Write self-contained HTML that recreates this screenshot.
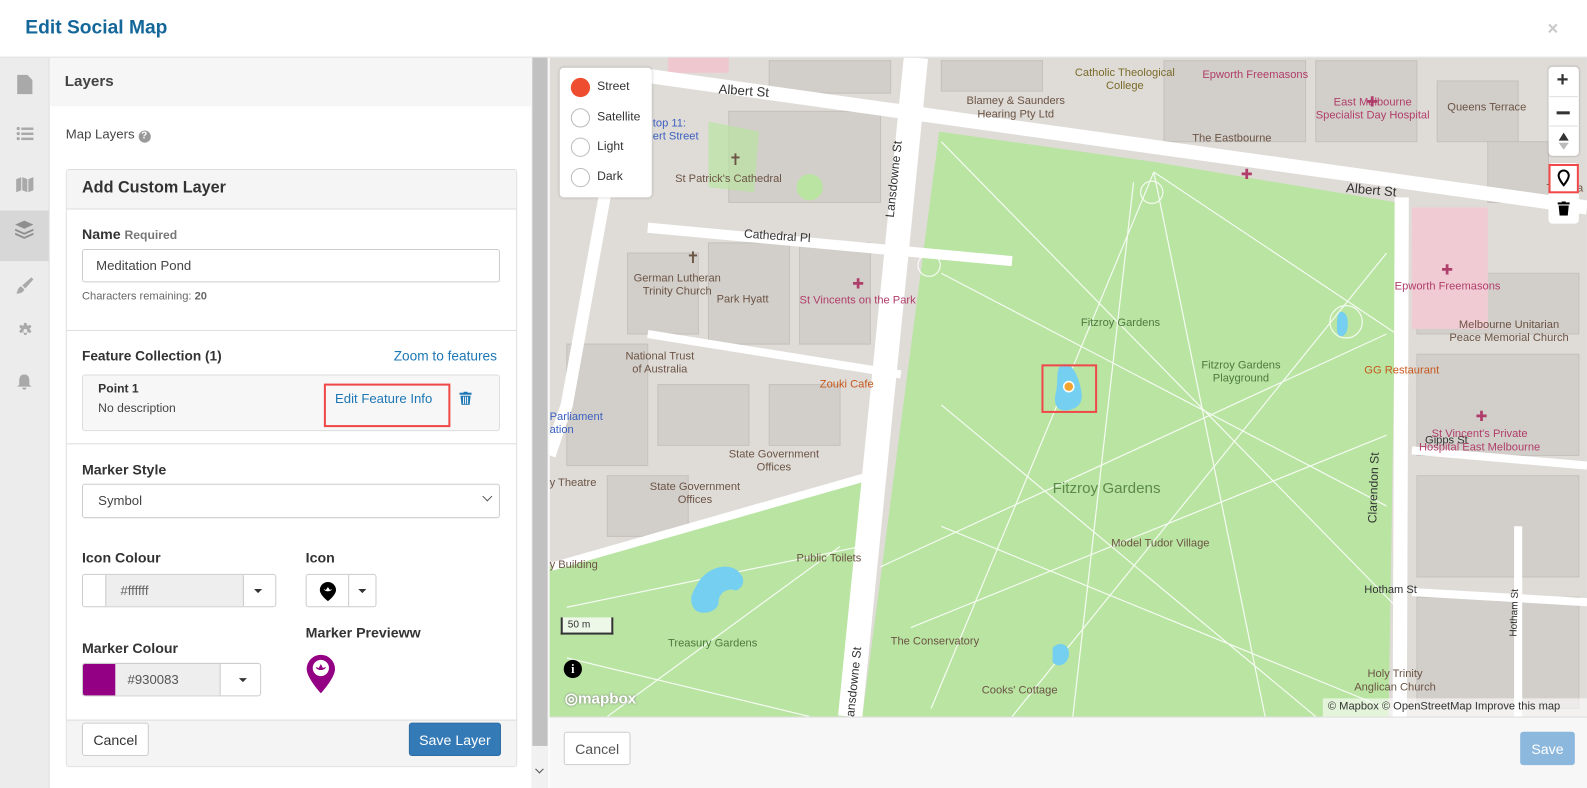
<!DOCTYPE html>
<html><head><meta charset="utf-8"><style>
*{box-sizing:border-box;margin:0;padding:0}
body{width:1587px;height:779px;overflow:hidden;background:#fff;font-family:"Liberation Sans",sans-serif;color:#333;position:relative;font-size:13px}
#w{position:absolute;left:0;top:0;width:1568px;height:770px;transform:scale(1.0121);transform-origin:0 0}
.a{position:absolute}
.lbl{font-weight:bold;font-size:14px;color:#333}
.inp{border:1px solid #ccc;border-radius:3px;background:#fff}
.btn{border:1px solid #ccc;border-radius:3px;background:#fff;font-size:14px;display:flex;align-items:center;justify-content:center}
.ml{font-size:11px;color:#6b5444;text-align:center;line-height:13px;position:absolute;white-space:nowrap}
</style></head><body><div id="w">
<div class="a" style="left:25px;top:17px;font-size:19px;font-weight:bold;color:#15679a">Edit Social Map</div>
<div class="a" style="left:1529px;top:18px;font-size:18px;color:#c8c8c8;font-weight:bold">×</div>
<div class="a" style="left:0;top:56px;width:1568px;height:1px;background:#ddd"></div>

<div class="a" style="left:0;top:57px;width:49px;height:722px;background:#ececec;border-right:1px solid #ddd"></div>
<div class="a" style="left:0;top:208px;width:48px;height:50px;background:#d7d7d7"></div>
<svg class="a" style="left:0;top:57px" width="48" height="340" fill="#a9a9a9">
<path d="M17 17h10l5 5v14h-15z"/>
<g><circle cx="18" cy="70" r="1.6"/><circle cx="18" cy="75" r="1.6"/><circle cx="18" cy="80" r="1.6"/><rect x="21" y="69" width="12" height="2.4"/><rect x="21" y="74" width="12" height="2.4"/><rect x="21" y="79" width="12" height="2.4"/></g>
<path d="M16 120l5-2v13l-5 2zM22 118l5 2v13l-5-2zM28 120l5-2v13l-5 2z"/>
<path d="M24 161l9 4-9 4-9-4zM15 169l9 4 9-4v2l-9 4-9-4zM15 173l9 4 9-4v2l-9 4-9-4z" fill="#8e8e8e"/>
<path d="M31 217l2 2-8 9-3-3zM21 226l3 3c-1 3-4 4-8 4 2-2 1-6 5-7z"/>
<path d="M24 262l2 0 1 3 3-1 1 2-2 2 2 2-1 2-3-1-1 3h-2l-1-3-3 1-1-2 2-2-2-2 1-2 3 1zM25 268a2 2 0 1 0 .1 0z"/>
<path d="M24 313c4 0 5 3 5 6v4l2 2h-14l2-2v-4c0-3 1-6 5-6zM22 326h4a2 2 0 0 1-4 0z"/>
</svg>

<div class="a" style="left:49px;top:57px;width:476px;height:48px;background:#f6f6f6"></div>
<div class="a" style="left:64px;top:72px;font-size:15px;font-weight:bold;color:#444">Layers</div>
<div class="a" style="left:65px;top:125px;font-size:13px;color:#444">Map Layers <span style="display:inline-block;width:12px;height:12px;border-radius:50%;background:#999;color:#fff;font-size:10px;text-align:center;line-height:12px;font-weight:bold">?</span></div>
<div class="a" style="left:65px;top:167px;width:446px;height:591px;border:1px solid #ddd;border-radius:3px;background:#fff"></div>
<div class="a" style="left:66px;top:168px;width:444px;height:39px;background:#f5f5f5;border-bottom:1px solid #ddd"></div>
<div class="a" style="left:81px;top:177px;font-size:16px;font-weight:bold;color:#333">Add Custom Layer</div>
<div class="a lbl" style="left:81px;top:223px">Name <span style="font-size:12px;color:#777">Required</span></div>
<div class="a inp" style="left:81px;top:246px;width:413px;height:33px;padding:8px 13px;font-size:13px;color:#444">Meditation Pond</div>
<div class="a" style="left:81px;top:287px;font-size:11px;color:#666">Characters remaining: <b>20</b></div>
<div class="a" style="left:66px;top:326px;width:444px;height:1px;background:#ddd"></div>
<div class="a lbl" style="left:81px;top:344px;font-size:13.5px">Feature Collection (1)</div>
<div class="a" style="left:389px;top:344px;font-size:13.5px;color:#1d77b5">Zoom to features</div>
<div class="a" style="left:81px;top:370px;width:413px;height:56px;background:#f7f7f7;border:1px solid #ddd;border-radius:3px"></div>
<div class="a" style="left:97px;top:377px;font-size:12px;font-weight:bold;color:#333">Point 1</div>
<div class="a" style="left:97px;top:396px;font-size:12px;color:#444">No description</div>
<div class="a" style="left:320px;top:379px;width:125px;height:43px;border:2px solid #f04848"></div>
<div class="a" style="left:331px;top:386px;font-size:13px;color:#1d77b5">Edit Feature Info</div>
<svg class="a" style="left:454px;top:387px" width="12" height="13" fill="#1d77b5"><rect x="0" y="1" width="12" height="2"/><rect x="4" y="0" width="4" height="2"/><path d="M1 4h10l-1 9H2zM3.5 5v7h1V5zM5.5 5v7h1V5zM7.5 5v7h1V5z" fill-rule="evenodd"/></svg>
<div class="a" style="left:66px;top:438px;width:444px;height:1px;background:#ddd"></div>
<div class="a lbl" style="left:81px;top:456px">Marker Style</div>
<div class="a inp" style="left:81px;top:478px;width:413px;height:34px;padding:8px 15px;font-size:13px;color:#444">Symbol</div>
<div class="a" style="left:478px;top:487px;width:7px;height:7px;border-right:1.5px solid #555;border-bottom:1.5px solid #555;transform:rotate(45deg)"></div>
<div class="a lbl" style="left:81px;top:543px">Icon Colour</div>
<div class="a inp" style="left:81px;top:567px;width:192px;height:33px;overflow:hidden"><div class="a" style="left:22px;top:0;width:137px;height:33px;background:#eee;border-left:1px solid #ccc;border-right:1px solid #ccc;padding:8px 14px;font-size:13px;color:#666">#ffffff</div><div class="a" style="left:169px;top:14px;border:4px solid transparent;border-top:4px solid #333"></div></div>
<div class="a lbl" style="left:302px;top:543px">Icon</div>
<div class="a inp" style="left:302px;top:567px;width:70px;height:33px"><div class="a" style="left:41px;top:0;width:1px;height:31px;background:#ccc"></div><div class="a" style="left:51px;top:14px;border:4px solid transparent;border-top:4px solid #333"></div>
<svg class="a" style="left:12px;top:6px" width="18" height="20"><path d="M9 1a8 8 0 0 1 8 8c0 5-8 11-8 11S1 14 1 9a8 8 0 0 1 8-8z" fill="#000"/><path d="M5 8c1 3 7 3 8 0l-2 1-2-3-2 3z" fill="#fff"/></svg></div>
<div class="a lbl" style="left:81px;top:632px">Marker Colour</div>
<div class="a inp" style="left:81px;top:655px;width:177px;height:33px;overflow:hidden"><div class="a" style="left:0;top:0;width:32px;height:33px;background:#930083"></div><div class="a" style="left:32px;top:0;width:104px;height:33px;background:#eee;border-right:1px solid #ccc;padding:8px 12px;font-size:13px;color:#555">#930083</div><div class="a" style="left:154px;top:14px;border:4px solid transparent;border-top:4px solid #333"></div></div>
<div class="a lbl" style="left:302px;top:617px">Marker Previeww</div>
<svg class="a" style="left:302px;top:646px" width="30" height="40"><path d="M15 1a14 14 0 0 1 14 14c0 9-14 24-14 24S1 24 1 15A14 14 0 0 1 15 1z" fill="#930083"/><circle cx="15" cy="14" r="8" fill="#fff"/><path d="M10 13c1 4 9 4 10 0l-3 1-2-4-2 4z" fill="#930083"/></svg>
<div class="a" style="left:66px;top:711px;width:444px;height:46px;background:#f4f4f4;border-top:1px solid #ddd"></div>
<div class="a btn" style="left:81px;top:714px;width:66px;height:33px;color:#333">Cancel</div>
<div class="a btn" style="left:404px;top:714px;width:91px;height:33px;background:#337ab7;border-color:#2e6da4;color:#fff">Save Layer</div>

<div class="a" style="left:525px;top:57px;width:17px;height:722px;background:#f1f1f1"></div>
<div class="a" style="left:526px;top:57px;width:15px;height:680px;background:#c1c1c1"></div>
<div class="a" style="left:530px;top:757px;width:6px;height:6px;border-right:1.5px solid #555;border-bottom:1.5px solid #555;transform:rotate(45deg)"></div>

<svg class="a" style="left:543px;top:57px" width="1025" height="651" viewBox="543 57 1025 651">
<rect x="543" y="57" width="1025" height="651" fill="#dfdcd8"/>
<g fill="#d2ceca" stroke="#c5c0bb" stroke-width="1">
<rect x="760" y="60" width="120" height="32"/><rect x="930" y="60" width="100" height="30"/><rect x="1150" y="60" width="140" height="80"/><rect x="1300" y="60" width="100" height="80"/><rect x="1420" y="80" width="80" height="60"/>
<rect x="720" y="110" width="150" height="90"/><rect x="620" y="250" width="70" height="80"/><rect x="700" y="240" width="80" height="100"/><rect x="790" y="240" width="70" height="100"/>
<rect x="560" y="340" width="80" height="120"/><rect x="650" y="380" width="90" height="60"/><rect x="760" y="380" width="70" height="60"/><rect x="600" y="470" width="80" height="60"/>
<rect x="1400" y="270" width="160" height="60"/><rect x="1400" y="350" width="160" height="100"/><rect x="1400" y="470" width="160" height="100"/><rect x="1400" y="590" width="160" height="110"/><rect x="1470" y="140" width="60" height="60"/>
</g>
<rect x="660" y="57" width="60" height="15" fill="#efc7cf"/>
<path d="M1395 205h75v120h-75z" fill="#f0cbd3"/>
<path d="M928 130L1140 160L1380 200L1372 708L852 708Z" fill="#b9e4a2"/>
<path d="M543 560L700 515L857 470L850 708L543 708Z" fill="#b9e4a2"/>
<path d="M700 120l50 10-5 60-45-5z" fill="#b9e4a2" opacity=".7"/>
<circle cx="800" cy="185" r="13" fill="#b9e4a2"/>
<g stroke="#fff" stroke-width="1.2" fill="none" opacity=".85">
<path d="M930 140L1380 600M1140 170L1380 330M1140 170L920 700M1140 170L1250 708M930 270L1370 500M870 560L1370 330M900 620L1370 430M1000 708L1370 250M930 520L1370 700M1120 180L1060 708M930 400L1300 708M560 600L850 540M560 650L800 708M600 708L830 540"/>
<circle cx="918" cy="262" r="11"/><circle cx="1138" cy="190" r="11"/><circle cx="1330" cy="318" r="16"/>
</g>
<g stroke="#fff" fill="none" stroke-linecap="butt">
<path d="M905 57L840 708" stroke-width="24"/>
<path d="M640 75L1568 205" stroke-width="14"/>
<path d="M1385 195L1383 708" stroke-width="14"/>
<path d="M640 225L1000 258" stroke-width="10"/>
<path d="M640 330L890 370" stroke-width="8"/>
<path d="M545 560L860 470" stroke-width="8"/>
<path d="M620 70L560 400L543 450" stroke-width="12"/>
<path d="M1395 585L1568 595" stroke-width="8"/><path d="M1395 445L1568 460" stroke-width="8"/><path d="M1500 520L1500 708" stroke-width="8"/>
</g>
<path d="M690 575c10-15 30-20 40-10s0 20-5 18-15 2-15 12-20 15-25 5 0-15 5-25z" fill="#75cff0"/>
<path d="M1047 362c6-6 14 0 18 12s8 25-5 30-20-2-17-15 0-20 4-27z" fill="#75cff0"/>
<path d="M1325 308c6 0 8 10 6 18s-10 8-10 0 0-18 4-18z" fill="#75cff0"/>
<path d="M1040 640c8-8 18-2 16 8s-12 12-16 6z" fill="#75cff0"/>
<rect x="1030" y="361" width="53" height="46" fill="none" stroke="#f04848" stroke-width="2"/>
<circle cx="1056" cy="382" r="5" fill="#f3a530" stroke="#fff" stroke-width="1.5"/>
</svg>
<div class="a" style="left:710px;top:82px;font-size:13px;color:#333;transform:rotate(4deg)">Albert St</div>
<div class="a" style="left:1330px;top:180px;font-size:13px;color:#333;transform:rotate(5deg)">Albert St</div>
<div class="a" style="left:735px;top:226px;font-size:12px;color:#333;transform:rotate(4deg)">Cathedral Pl</div>
<div class="a" style="left:845px;top:170px;font-size:12px;color:#333;transform:rotate(-84deg)">Lansdowne St</div>
<div class="a" style="left:805px;top:670px;font-size:12px;color:#333;transform:rotate(-84deg)">Lansdowne St</div>
<div class="a" style="left:1322px;top:475px;font-size:12px;color:#333;transform:rotate(-88deg)">Clarendon St</div>
<div class="a" style="left:1473px;top:600px;font-size:10px;color:#333;transform:rotate(-88deg)">Hotham St</div>
<div class="a" style="left:1348px;top:577px;font-size:11px;color:#333">Hotham St</div>
<div class="a" style="left:1408px;top:429px;font-size:11px;color:#333">Gipps St</div>
<div class="ml" style="left:667px;top:171px">St Patrick's Cathedral</div>
<div class="ml" style="left:626px;top:269px">German Lutheran<br>Trinity Church</div>
<div class="ml" style="left:708px;top:290px">Park Hyatt</div>
<div class="ml" style="left:790px;top:291px;color:#b03e6a">St Vincents on the Park</div>
<div class="ml" style="left:618px;top:346px">National Trust<br>of Australia</div>
<div class="ml" style="left:810px;top:374px;color:#c6581c">Zouki Cafe</div>
<div class="ml" style="left:720px;top:443px">State Government<br>Offices</div>
<div class="ml" style="left:642px;top:475px">State Government<br>Offices</div>
<div class="ml" style="left:787px;top:546px">Public Toilets</div>
<div class="ml" style="left:660px;top:630px;color:#4c7a3f">Treasury Gardens</div>
<div class="ml" style="left:880px;top:628px">The Conservatory</div>
<div class="ml" style="left:970px;top:676px">Cooks' Cottage</div>
<div class="ml" style="left:1068px;top:313px;color:#4c7a3f">Fitzroy Gardens</div>
<div class="ml" style="left:1187px;top:355px;color:#4c7a3f">Fitzroy Gardens<br>Playground</div>
<div class="ml" style="left:1040px;top:476px;font-size:15px;color:#5b8a4b">Fitzroy Gardens</div>
<div class="ml" style="left:1098px;top:531px">Model Tudor Village</div>
<div class="ml" style="left:1062px;top:66px;color:#7a6a2a">Catholic Theological<br>College</div>
<div class="ml" style="left:955px;top:94px">Blamey &amp; Saunders<br>Hearing Pty Ltd</div>
<div class="ml" style="left:1188px;top:68px;color:#b03e6a">Epworth Freemasons</div>
<div class="ml" style="left:1300px;top:95px;color:#b03e6a">East Melbourne<br>Specialist Day Hospital</div>
<div class="ml" style="left:1178px;top:131px">The Eastbourne</div>
<div class="ml" style="left:1430px;top:100px">Queens Terrace</div>
<div class="ml" style="left:1528px;top:180px">Tribeca<br>Apart</div>
<div class="ml" style="left:1378px;top:277px;color:#b03e6a">Epworth Freemasons</div>
<div class="ml" style="left:1432px;top:315px">Melbourne Unitarian<br>Peace Memorial Church</div>
<div class="ml" style="left:1348px;top:360px;color:#c6581c">GG Restaurant</div>
<div class="ml" style="left:1402px;top:423px;color:#b03e6a">St Vincent's Private<br>Hospital East Melbourne</div>
<div class="ml" style="left:1338px;top:660px">Holy Trinity<br>Anglican Church</div>
<div class="ml" style="left:543px;top:406px;color:#3b5fc0;text-align:left">Parliament<br>ation</div>
<div class="ml" style="left:645px;top:116px;color:#3b5fc0;text-align:left">top 11:<br>ert Street</div>
<div class="ml" style="left:543px;top:471px;text-align:left">y Theatre</div>
<div class="ml" style="left:543px;top:552px;text-align:left">y Building</div>
<div class="a" style="left:1226px;top:164px;font-size:14px;color:#b03e6a">✚</div>
<div class="a" style="left:1424px;top:258px;font-size:14px;color:#b03e6a">✚</div>
<div class="a" style="left:842px;top:272px;font-size:14px;color:#b03e6a">✚</div>
<div class="a" style="left:1350px;top:92px;font-size:14px;color:#b03e6a">✚</div>
<div class="a" style="left:1458px;top:403px;font-size:14px;color:#b03e6a">✚</div>
<div class="a" style="left:720px;top:148px;font-size:16px;color:#6b5444">✝</div>
<div class="a" style="left:678px;top:245px;font-size:16px;color:#6b5444">✝</div>
<div class="a" style="left:553px;top:67px;width:91px;height:128px;background:#fff;border-radius:4px;box-shadow:0 0 3px rgba(0,0,0,.2)"></div>
<div class="a" style="left:564px;top:77px;width:19px;height:19px;border-radius:50%;background:#ef4d2f"></div>
<div class="a" style="left:564px;top:107px;width:19px;height:19px;border-radius:50%;border:1px solid #bbb"></div>
<div class="a" style="left:564px;top:136px;width:19px;height:19px;border-radius:50%;border:1px solid #bbb"></div>
<div class="a" style="left:564px;top:166px;width:19px;height:19px;border-radius:50%;border:1px solid #bbb"></div>
<div class="a" style="left:590px;top:71px;font-size:12px;color:#333;line-height:29.7px">Street<br>Satellite<br>Light<br>Dark</div>
<div class="a" style="left:1530px;top:66px;width:30px;height:88px;background:#fff;border-radius:4px;box-shadow:0 0 2px rgba(0,0,0,.3)"></div>
<div class="a" style="left:1538px;top:68px;font-size:20px;font-weight:bold;color:#333">+</div>
<div class="a" style="left:1531px;top:95px;width:28px;height:1px;background:#ddd"></div>
<div class="a" style="left:1538px;top:110px;width:13px;height:2.5px;background:#333"></div>
<div class="a" style="left:1531px;top:124px;width:28px;height:1px;background:#ddd"></div>
<div class="a" style="left:1540px;top:131px;border:5px solid transparent;border-bottom:8px solid #333;border-top:0"></div>
<div class="a" style="left:1540px;top:141px;border:5px solid transparent;border-top:7px solid #bbb;border-bottom:0"></div>
<div class="a" style="left:1530px;top:161px;width:30px;height:60px;background:#fff;border-radius:4px"></div>
<div class="a" style="left:1530px;top:162px;width:30px;height:29px;border:2px solid #f04848"></div>
<svg class="a" style="left:1538px;top:167px" width="14" height="18"><path d="M7 1.5a5 5 0 0 1 5 5c0 3.5-5 9.5-5 9.5S2 10 2 6.5a5 5 0 0 1 5-5z" fill="none" stroke="#000" stroke-width="2"/></svg>
<svg class="a" style="left:1539px;top:199px" width="12" height="14" fill="#000"><rect x="0" y="1" width="12" height="2"/><rect x="4" y="0" width="4" height="2"/><path d="M1 4h10l-1 10H2z"/></svg>
<div class="a" style="left:554px;top:610px;width:52px;height:17px;border:2px solid #333;border-top:none;background:rgba(255,255,255,.75);font-size:10px;padding:2px 5px;color:#333">50 m</div>
<div class="a" style="left:557px;top:652px;width:18px;height:18px;border-radius:50%;background:#000;color:#fff;font-size:12px;font-weight:bold;text-align:center;line-height:18px;font-family:'Liberation Serif',serif">i</div>
<div class="a" style="left:558px;top:681px;font-size:15px;font-weight:bold;color:#fff;text-shadow:0 0 2px #777">◎mapbox</div>
<div class="a" style="left:1307px;top:690px;width:261px;height:18px;background:rgba(255,255,255,.6);font-size:11px;color:#333;padding:2px 5px">© Mapbox © OpenStreetMap  Improve this map</div>

<div class="a" style="left:543px;top:708px;width:1025px;height:71px;background:#f7f7f7;border-top:1px solid #ddd"></div>
<div class="a btn" style="left:557px;top:723px;width:66px;height:33px;color:#555">Cancel</div>
<div class="a btn" style="left:1502px;top:723px;width:54px;height:33px;background:#8db8dd;border-color:#8db8dd;color:#fff">Save</div>
</div></body></html>
